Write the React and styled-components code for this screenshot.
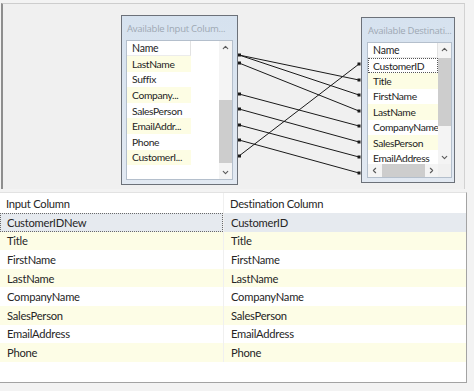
import { createGlobalStyle, styled } from 'styled-components';
import { ChevronUp, ChevronDown, ChevronLeft, ChevronRight } from 'lucide-react';

const Global = createGlobalStyle`
    html, body {
        margin: 0;
        padding: 0;
        background: #f3f3f3;
    }
    body {
        font-family: Lato, "Open Sans", sans-serif;
        color: #1e1e1e;
    }
`;

const Page = styled.div`
    width: 474px;
    height: 391px;
    overflow: hidden;
    box-sizing: border-box;
    padding-top: 3px;
    display: flex;
    flex-direction: column;
    background: #f3f3f3;
`;

const Designer = styled.div`
    position: relative;
    box-sizing: border-box;
    margin-left: 1px;
    width: 464px;
    height: 186px;
    background: #f0f0f0;
    border-top: 1px solid #cdcdcd;
    border-left: 2px solid #8e8e8e;
    border-right: 1px solid #d2d2d2;
`;

const TableBox = styled.div`
    position: absolute;
    left: ${p => p.$left}px;
    top: ${p => p.$top}px;
    width: ${p => p.$width}px;
    height: ${p => p.$height}px;
    box-sizing: border-box;
    border: 1px solid #6c7179;
    background: linear-gradient(#d6e2ef, #e2e9f2);
    padding: ${p => p.$pad};
    display: flex;
    flex-direction: column;
`;

const BoxTitle = styled.div`
    height: ${p => p.$height}px;
    flex: none;
    display: flex;
    align-items: center;
    padding-left: 1px;
    font-family: "Open Sans", sans-serif;
    font-size: 9.5px;
    letter-spacing: -0.25px;
    color: #9ea8b3;
    white-space: nowrap;
    overflow: hidden;
`;

const ListArea = styled.div`
    flex: 1;
    min-height: 0;
    background: #fff;
    border: 1px solid #b4bfcc;
    display: grid;
    grid-template-columns: 1fr 13px;
    grid-template-rows: 1fr ${p => (p.$hscroll ? '13px' : '0')};
    overflow: hidden;
`;

const Items = styled.div`
    display: flex;
    flex-direction: column;
    overflow: hidden;
`;

const NameHeader = styled.div`
    width: ${p => p.$width};
    height: 15px;
    flex: none;
    box-sizing: border-box;
    padding-left: 5px;
    display: flex;
    align-items: center;
    font-size: 10.5px;
    letter-spacing: -0.2px;
    border-right: 1px solid #e2e2e2;
    border-bottom: 1px solid #ececec;
`;

const ListRow = styled.div`
    width: ${p => p.$width};
    height: ${p => p.$height}px;
    flex: none;
    box-sizing: border-box;
    padding-left: 5px;
    display: flex;
    align-items: center;
    font-size: 10.3px;
    letter-spacing: -0.35px;
    white-space: nowrap;
    overflow: hidden;
    background: ${p => (p.$alt ? '#fdfde4' : '#fff')};
    outline: ${p => (p.$focus ? '1px dotted #555' : 'none')};
    outline-offset: -1px;
`;

const VScroll = styled.div`
    display: flex;
    flex-direction: column;
    background: #f4f4f4;
    color: #5a5a5a;
`;

const Arrow = styled.div`
    flex: none;
    height: 13px;
    width: 13px;
    display: flex;
    align-items: center;
    justify-content: center;
`;

const Track = styled.div`
    flex: 1;
    display: flex;
    flex-direction: ${p => (p.$horizontal ? 'row' : 'column')};
`;

const Thumb = styled.div`
    background: #cdcdcd;
    margin-top: ${p => p.$before}px;
    height: ${p => p.$size}px;
    width: 100%;
`;

const HThumb = styled.div`
    background: #cdcdcd;
    margin-left: ${p => p.$before}px;
    width: ${p => p.$size}px;
    height: 100%;
`;

const HScroll = styled.div`
    display: flex;
    background: #f4f4f4;
    color: #5a5a5a;
`;

const Grip = styled.div`
    background: #f0f0f0;
`;

const Wires = styled.svg`
    position: absolute;
    left: 0;
    top: 0;
    width: 100%;
    height: 100%;
    overflow: visible;
    pointer-events: none;
`;

const GridPanel = styled.div`
    margin-top: 3px;
    width: 467px;
    height: 191px;
    box-sizing: border-box;
    background: #fff;
    border-top: 1px solid #e2e2e2;
    border-right: 1px solid #a3a3a3;
    border-bottom: 1px solid #a3a3a3;
    font-size: 11.2px;
    letter-spacing: -0.25px;
    color: #262626;
`;

const GridRow = styled.div`
    display: grid;
    grid-template-columns: 223px 222px;
    height: ${p => p.$height}px;
    background: ${p => (p.$selected ? '#e6eaef' : p.$alt ? '#fdfde6' : '#fff')};
`;

const Cell = styled.div`
    display: flex;
    align-items: center;
    box-sizing: border-box;
    padding-left: ${p => (p.$header ? 6 : 7)}px;
    white-space: nowrap;
    border-left: ${p => (p.$second ? '1px solid #f0f0f0' : 'none')};
    outline: ${p => (p.$focus ? '1px dotted #6a6a6a' : 'none')};
    outline-offset: -1px;
`;

const inputItems = ['LastName', 'Suffix', 'Company...', 'SalesPerson', 'EmailAddr...', 'Phone', 'CustomerI...'];
const destItems = ['CustomerID', 'Title', 'FirstName', 'LastName', 'CompanyName', 'SalesPerson', 'EmailAddress'];

const links = [
    [55, 80], [55, 95], [63, 111], [94, 126],
    [109, 142], [125, 157], [140, 173], [156, 64],
];

const mappings = [
    ['CustomerIDNew', 'CustomerID'],
    ['Title', 'Title'],
    ['FirstName', 'FirstName'],
    ['LastName', 'LastName'],
    ['CompanyName', 'CompanyName'],
    ['SalesPerson', 'SalesPerson'],
    ['EmailAddress', 'EmailAddress'],
    ['Phone', 'Phone'],
];

const VScrollBar = ({ before, size }) => (
    <VScroll>
        <Arrow><ChevronUp size={9} strokeWidth={3} /></Arrow>
        <Track><Thumb $before={before} $size={size} /></Track>
        <Arrow><ChevronDown size={9} strokeWidth={3} /></Arrow>
    </VScroll>
);

const App = () => {
    const leftEnds = [...new Set(links.map(l => l[0]))];

    return (
        <Page>
            <Global />
            <Designer>
                <TableBox $left={118} $top={11} $width={117} $height={170} $pad="0 4px 4px 4px">
                    <BoxTitle $height={24}>Available Input Colum...</BoxTitle>
                    <ListArea>
                        <Items>
                            <NameHeader $width="64px">Name</NameHeader>
                            {inputItems.map((item, i) =>
                                <ListRow key={item} $width="64px" $height={15.6} $alt={i % 2 === 0}>{item}</ListRow>
                            )}
                        </Items>
                        <VScrollBar before={46} size={63} />
                    </ListArea>
                </TableBox>

                <TableBox $left={358} $top={13} $width={94} $height={166} $pad="0 2px 4px 5px">
                    <BoxTitle $height={24}>Available Destinati...</BoxTitle>
                    <ListArea $hscroll>
                        <Items>
                            <NameHeader $width="100%">Name</NameHeader>
                            {destItems.map((item, i) =>
                                <ListRow key={item} $width="100%" $height={15.4} $alt={i % 2 === 1} $focus={i === 0}>{item}</ListRow>
                            )}
                        </Items>
                        <VScrollBar before={2} size={68} />
                        <HScroll>
                            <Arrow><ChevronLeft size={9} strokeWidth={3} /></Arrow>
                            <Track $horizontal><HThumb $before={1} $size={43} /></Track>
                            <Arrow><ChevronRight size={9} strokeWidth={3} /></Arrow>
                        </HScroll>
                        <Grip />
                    </ListArea>
                </TableBox>

                <Wires>
                    <g transform="translate(-3,-4)" stroke="#1a1a1a" strokeWidth="1" fill="#1a1a1a">
                        {links.map(([a, b], i) =>
                            <line key={i} x1={239} y1={a} x2={359} y2={b} />
                        )}
                        {leftEnds.map(y =>
                            <rect key={'l' + y} x={238} y={y - 1.5} width={3} height={3} stroke="none" />
                        )}
                        {links.map(([, b]) =>
                            <rect key={'r' + b} x={357.5} y={b - 1.5} width={3} height={3} stroke="none" />
                        )}
                    </g>
                </Wires>
            </Designer>

            <GridPanel>
                <GridRow $height={20}>
                    <Cell $header>Input Column</Cell>
                    <Cell $header $second>Destination Column</Cell>
                </GridRow>
                {mappings.map(([input, dest], i) =>
                    <GridRow key={input} $height={18.6} $selected={i === 0} $alt={i % 2 === 1}>
                        <Cell $focus={i === 0}>{input}</Cell>
                        <Cell $second>{dest}</Cell>
                    </GridRow>
                )}
            </GridPanel>
        </Page>
    );
};

export default App;
